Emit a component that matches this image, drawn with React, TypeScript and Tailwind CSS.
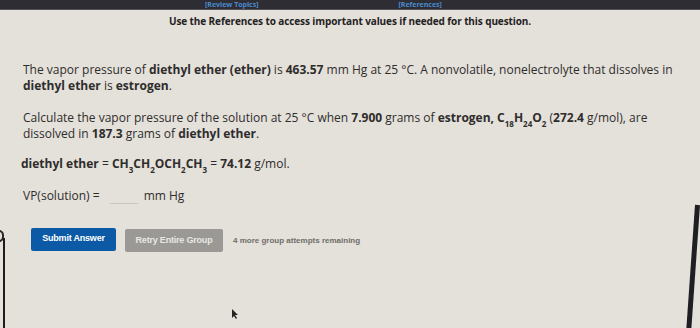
import React from 'react';

function Sub({ children }: { children: React.ReactNode }) {
  return <sub className="text-[8px] align-[-3px] leading-none">{children}</sub>;
}

export default function App() {
  return (
    <div
      className="relative w-[700px] h-[328px] overflow-hidden bg-[#e4e0da] text-[#2e2d2c]"
      style={{ fontFamily: '"Open Sans", "DejaVu Sans", sans-serif' }}
    >
      {/* top toolbar */}
      <div className="h-[10px] bg-[#2e2d33] border-b border-[#55535a] flex items-center">
        <span className="ml-[205px] text-[7px] font-bold text-[#4a8ad0] leading-none">[Review Topics]</span>
        <span className="ml-[140px] text-[7px] font-bold text-[#4a8ad0] leading-none">[References]</span>
      </div>

      <p className="mt-[4px] text-center text-[10px] font-bold text-[#232222] tracking-[-0.1px]">
        Use the References to access important values if needed for this question.
      </p>

      <div className="pl-[23px] text-[12px] leading-[16px] whitespace-nowrap">
        <p className="mt-[33px]">
          The vapor pressure of <b>diethyl ether (ether)</b> is <b>463.57</b> mm Hg at 25 °C. A nonvolatile, nonelectrolyte that dissolves in
          <br />
          <b>diethyl ether</b> is <b>estrogen</b>.
        </p>

        <p className="mt-[16px]">
          Calculate the vapor pressure of the solution at 25 °C when <b>7.900</b> grams of <b>estrogen, C<Sub>18</Sub>H<Sub>24</Sub>O<Sub>2</Sub></b> (<b>272.4</b> g/mol), are
          <br />
          dissolved in <b>187.3</b> grams of <b>diethyl ether</b>.
        </p>

        <p className="mt-[14px] -ml-[2px]">
          <b>diethyl ether</b> = <b>CH<Sub>3</Sub>CH<Sub>2</Sub>OCH<Sub>2</Sub>CH<Sub>3</Sub></b> = <b>74.12</b> g/mol.
        </p>

        <div className="mt-[16px] flex items-end">
          <span>VP(solution) =</span>
          <span className="ml-[10px] w-[28px] h-[15px] border-b border-[#c9c5bf]" />
          <span className="ml-[6px]">mm Hg</span>
        </div>
      </div>

      <div className="mt-[22px] ml-[31px] flex items-center gap-[9px]">
        <button className="w-[85px] h-[23px] rounded-[2px] bg-[#0c5aa6] text-white text-[9px] font-bold tracking-[-0.2px]" style={{ fontFamily: '"Liberation Sans", Arial, sans-serif' }}>
          Submit Answer
        </button>
        <button className="mt-[3px] w-[98px] h-[23px] rounded-[2px] bg-[#9b9995] text-[#e9e7e3] text-[9px] font-bold tracking-[-0.2px]" style={{ fontFamily: '"Liberation Sans", Arial, sans-serif' }}>
          Retry Entire Group
        </button>
        <span className="mt-[3px] ml-[1px] text-[8px] font-bold text-[#6f6d6a]" style={{ fontFamily: '"Liberation Sans", Arial, sans-serif' }}>
          4 more group attempts remaining
        </span>
      </div>

      {/* photo edges */}
      <div className="absolute left-[3px] top-[238px] w-[2px] h-[100px] bg-[#1d1b1c]" />
      <div className="absolute -left-[6px] top-[230px] w-[10px] h-[12px] rounded-full border-2 border-[#2a2829]" />
      <div className="absolute right-0 top-[205px] w-[5px] h-[130px] bg-[#1f1e22] rotate-[4deg] origin-top" />
      <svg className="absolute left-[231px] top-[308px]" width="9" height="12" viewBox="0 0 9 12">
        <path d="M1 1 L1 10 L3 8 L5 11 L6 10 L4 7 L7 7 Z" fill="#222" />
      </svg>
    </div>
  );
}
